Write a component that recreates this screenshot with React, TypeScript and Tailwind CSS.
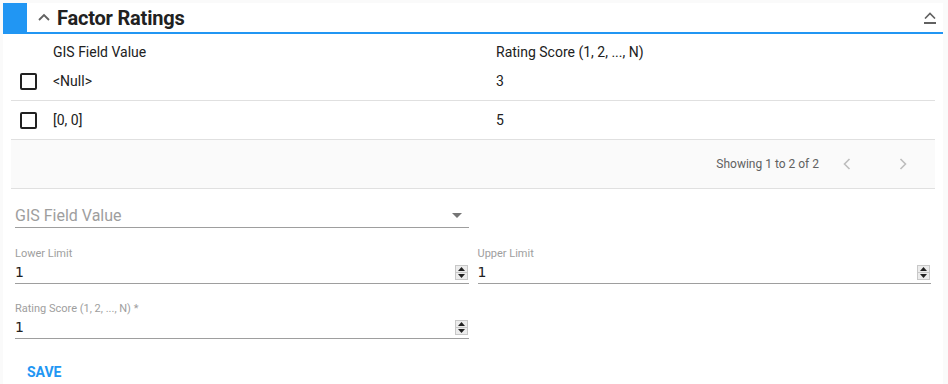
import React from "react";

const rows = [
  { value: "<Null>", score: "3" },
  { value: "[0, 0]", score: "5" },
];

// small native-looking number spinner
const Spinner = () => (
  <span className="flex flex-col w-[13px] h-[15px] border border-[#c8c8c8] bg-[#ececec]">
    <span className="flex-1 flex items-center justify-center border-b border-[#c8c8c8]">
      <svg width="7" height="4" viewBox="0 0 7 4"><path d="M0 4 L3.5 0 L7 4 Z" fill="#222" /></svg>
    </span>
    <span className="flex-1 flex items-center justify-center">
      <svg width="7" height="4" viewBox="0 0 7 4"><path d="M0 0 L3.5 4 L7 0 Z" fill="#222" /></svg>
    </span>
  </span>
);

const NumberField = ({ label }: { label: string }) => (
  <div className="flex flex-col">
    <label className="text-[11px] leading-[14px] text-[#9e9e9e]">{label}</label>
    <div className="flex items-center justify-between h-[23px] border-b border-[#9e9e9e]">
      <span className="text-[14px] text-[#212121] font-['DejaVu_Sans',sans-serif]">1</span>
      <span className="mr-[1px]">
        <Spinner />
      </span>
    </div>
  </div>
);

const App = () => {
  return (
    <div className="min-h-screen bg-[#fafafa] pt-[3px] pl-[3px] pr-[5px] font-['Roboto',sans-serif]">
      <div className="bg-white min-h-[381px]">
        {/* Header */}
        <div className="flex items-stretch h-[31px] border-b-2 border-[#2196f3]">
          <div className="w-[24px] bg-[#2196f3]" />
          <div className="flex items-center ml-[11px]">
            <svg width="12" height="8" viewBox="0 0 12 8" className="mt-[-2px]">
              <path d="M1 7 L6 2 L11 7" stroke="#616161" strokeWidth="1.8" fill="none" />
            </svg>
            <span className="ml-[7px] text-[20px] font-bold text-[#212121] tracking-[-0.2px]">Factor Ratings</span>
          </div>
          <div className="flex-1" />
          <div className="flex flex-col items-center justify-center mr-[7px] gap-[3px]">
            <svg width="12" height="7" viewBox="0 0 12 7">
              <path d="M1 6.5 L6 1.5 L11 6.5" stroke="#616161" strokeWidth="1.6" fill="none" />
            </svg>
            <span className="w-[12px] h-[2px] bg-[#616161]" />
          </div>
        </div>

        {/* Table */}
        <div className="mx-[8px]">
          <div className="flex items-end h-[28px] text-[14px] leading-[20px] text-[#212121]">
            <span className="pl-[42px] w-[485px]">GIS Field Value</span>
            <span>Rating Score (1, 2, ..., N)</span>
          </div>
          {rows.map((r) => (
            <div key={r.value} className="flex items-center h-[39px] border-b border-[#e0e0e0] text-[14px] text-[#212121]">
              <span className="ml-[9px] w-[17px] h-[17px] border-2 border-[#212121] rounded-[2px]" />
              <span className="ml-[16px] w-[443px]">{r.value}</span>
              <span>{r.score}</span>
            </div>
          ))}
          <div className="flex items-center justify-end h-[49px] bg-[#fafafa] border-b border-[#e0e0e0] text-[12px] text-[#616161]">
            <span>Showing 1 to 2 of 2</span>
            <svg width="8" height="12" viewBox="0 0 8 12" className="ml-[24px]">
              <path d="M6.5 1 L1.5 6 L6.5 11" stroke="#bdbdbd" strokeWidth="1.6" fill="none" />
            </svg>
            <svg width="8" height="12" viewBox="0 0 8 12" className="ml-[48px] mr-[28px]">
              <path d="M1.5 1 L6.5 6 L1.5 11" stroke="#bdbdbd" strokeWidth="1.6" fill="none" />
            </svg>
          </div>
        </div>

        {/* Form */}
        <div className="px-[12px] pt-[15px] grid grid-cols-2 gap-x-[9px]">
          <div className="flex items-center justify-between h-[24px] border-b border-[#9e9e9e]">
            <span className="text-[16px] text-[#9e9e9e]">GIS Field Value</span>
            <svg width="10" height="5" viewBox="0 0 10 5" className="mr-[7px]">
              <path d="M0 0 L5 5 L10 0 Z" fill="#757575" />
            </svg>
          </div>
          <div />
          <div className="mt-[19px]">
            <NumberField label="Lower Limit" />
          </div>
          <div className="mt-[19px]">
            <NumberField label="Upper Limit" />
          </div>
          <div className="mt-[18px]">
            <NumberField label="Rating Score (1, 2, ..., N) *" />
          </div>
          <div />
        </div>
        <div className="px-[24px] pt-[21px]">
          <button className="text-[14px] font-bold text-[#2196f3]">SAVE</button>
        </div>
      </div>
    </div>
  );
};

export default App;
